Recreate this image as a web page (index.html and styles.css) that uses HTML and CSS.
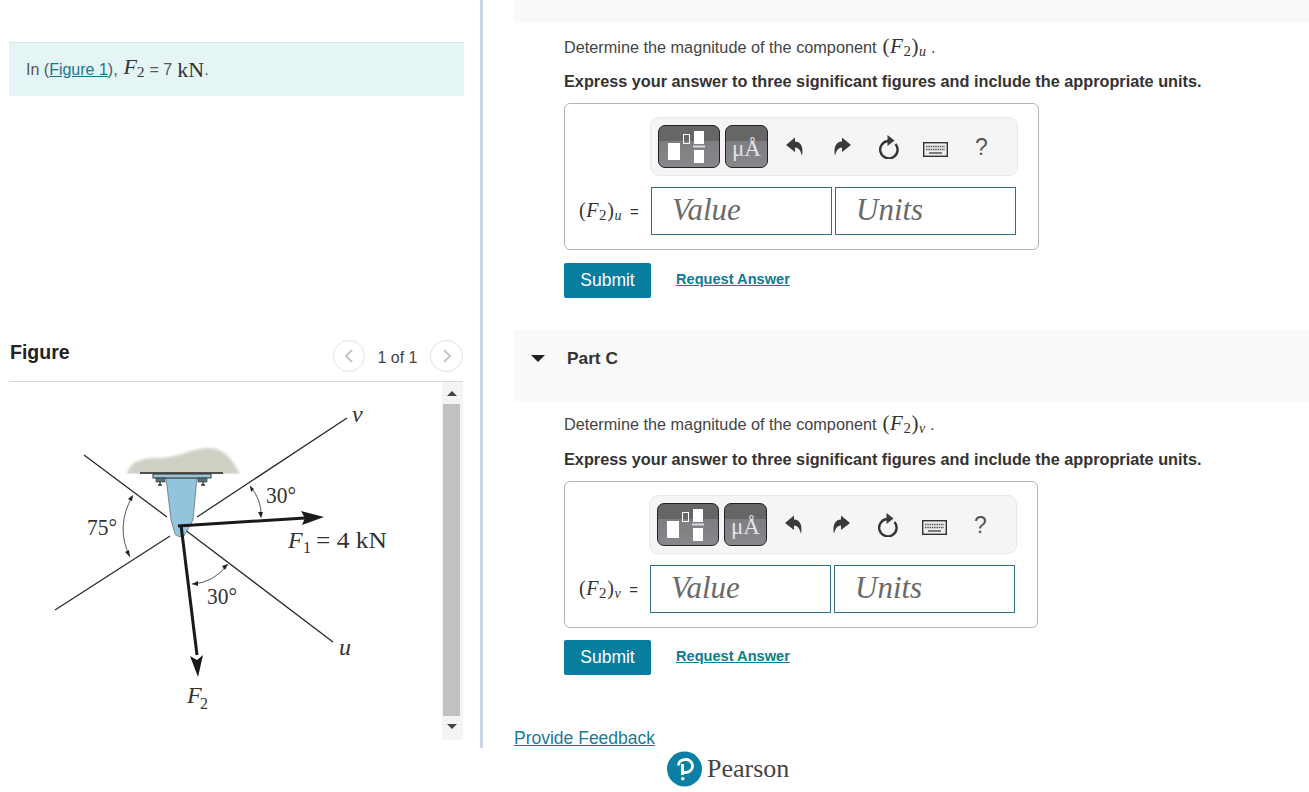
FILE: index.html
```html
<!DOCTYPE html>
<html lang="en">
<head>
<meta charset="utf-8">
<title>Part C</title>
<link rel="stylesheet" href="styles.css">
</head>
<body>
<div class="page">
  <aside class="left">
    <div class="info">In (<a href="#">Figure 1</a>),<span class="math math-info"><i>F</i><sub>2</sub></span><span class="info-eq">= 7</span><span class="math math-kn">kN</span>.</div>
    <div class="fig-head">
      <h2 class="fig-title">Figure</h2>
      <div class="pager">
        <span class="pg-btn"><svg width="12" height="16" viewBox="0 0 12 16"><path d="M9 2 3 8l6 6" class="chev"/></svg></span>
        <span class="pg-text">1 of 1</span>
        <span class="pg-btn pg-next"><svg width="12" height="16" viewBox="0 0 12 16"><path d="M3 2l6 6-6 6" class="chev"/></svg></span>
      </div>
    </div>
    <div class="fig-body">
      <svg class="diagram" width="433" height="358" viewBox="9 382 433 358">
        <defs>
          <filter id="soft" x="-10%" y="-20%" width="120%" height="140%"><feGaussianBlur stdDeviation="1.6"/></filter>
          <clipPath id="wallclip"><rect x="110" y="430" width="150" height="44"/></clipPath>
        </defs>
        <g clip-path="url(#wallclip)"><path d="M127 474 C130 462 140 458 160 458 C178 458 190 449 208 448 C222 447 232 458 240 474 Z" fill="#cfcfc3" filter="url(#soft)"/></g>
        <g class="thin">
          <path d="M347 418 197 517"/>
          <path d="M170 536 55 610"/>
          <path d="M84 455 167 517"/>
          <path d="M176 523 333 642"/>
        </g>
        <path d="M140 473H223" class="wall-line"/>
        <path d="M166 478H197L193 520 184 536Q178 538 175 534L171 520Z" fill="#93c4de" stroke="#333" stroke-width=".5"/>
        <rect x="153" y="474" width="58" height="4" fill="#9cc3d8" stroke="#333" stroke-width="1"/>
        <rect x="156" y="478" width="9" height="4" fill="#56707e" stroke="#333" stroke-width=".6"/>
        <rect x="198" y="478" width="9" height="4" fill="#56707e" stroke="#333" stroke-width=".6"/>
        <path d="M158 485h4M201 485h4M160 482v3M203 482v3" class="thin"/>
        <path d="M178 526 305 518" class="force"/>
        <path d="M324 517 301 511 305 518 302 525Z" fill="#1a1a1a"/>
        <path d="M181 525 197 655" class="force"/>
        <path d="M198 677 190 656 197 660 203 655Z" fill="#1a1a1a"/>
        <g class="arc">
          <path d="M132.500 496Q115 527 130 557"/>
          <path d="M250 486Q262 500 261 517"/>
          <path d="M228 564Q214 583 192 584"/>
        </g>
        <g fill="#222">
          <path d="M133 495 128 499 132 501Z"/>
          <path d="M130 557 125 552 129 550Z"/>
          <path d="M250 486 251 492 254 489Z"/>
          <path d="M261 518 258 512 263 512Z"/>
          <path d="M228 564 222 566 225 570Z"/>
          <path d="M192 584 198 581 198 586Z"/>
        </g>
        <text x="87" y="535" textLength="30" lengthAdjust="spacingAndGlyphs" class="fig-txt">75°</text>
        <text x="266" y="503" textLength="30" lengthAdjust="spacingAndGlyphs" class="fig-txt">30°</text>
        <text x="207" y="604" textLength="30" lengthAdjust="spacingAndGlyphs" class="fig-txt">30°</text>
        <text x="352" y="422" class="fig-txt fig-it">v</text>
        <text x="339" y="655" class="fig-txt fig-it">u</text>
        <text x="288" y="548" class="fig-txt fig-it">F</text>
        <text x="303" y="553" class="fig-sub">1</text>
        <text x="316" y="548" textLength="71" lengthAdjust="spacingAndGlyphs" class="fig-txt">= 4 kN</text>
        <text x="187" y="703" class="fig-txt fig-it">F</text>
        <text x="200" y="709" class="fig-sub">2</text>
      </svg>
      <div class="scrollbar">
        <span class="arrow-up"></span>
        <span class="thumb"></span>
        <span class="arrow-down"></span>
      </div>
    </div>
  </aside>

  <main class="right">
    <div class="band-top"></div>

    <p class="question q-first">Determine the magnitude of the component<span class="math math-q">(<i>F</i><sub>2</sub>)<sub><i>u</i></sub></span> .</p>
    <p class="express">Express your answer to three significant figures and include the appropriate units.</p>
    <div class="answer">
      <div class="toolbar">
        <button class="tool tool-wide"><svg width="48" height="34" viewBox="0 0 48 34"><path d="M1 13h12v17H1zM27 1h10v13H27zM27 20h10v13H27z" fill="#fff"/><rect x="16.500" y="4.500" width="6" height="9" fill="none" stroke="#fff"/><path d="M26 16.500h12" stroke="#ddd" stroke-width="2"/></svg></button>
        <button class="tool tool-unit">μÅ</button>
        <span class="ticon"><svg width="18" height="20" viewBox="0 0 18 20"><path d="M0 8 9 .5v4C14 4.500 18 9 16 19 15 14 13 11 9 10.500V15Z" class="solid"/></svg></span>
        <span class="ticon"><svg width="18" height="20" viewBox="0 0 18 20"><path d="M18 8 9 .5v4C4 4.500 0 9 2 19 3 14 5 11 9 10.500V15Z" class="solid"/></svg></span>
        <span class="ticon"><svg width="22" height="24" viewBox="0 0 22 24"><path d="M10 6A8.700 8.700 0 1 0 17.500 9" fill="none" stroke="#333" stroke-width="2.400"/><path d="M9.500 0v11l7-5.500Z" class="solid"/></svg></span>
        <span class="ticon ticon-kb"><svg width="25" height="15" viewBox="0 0 25 15"><rect x=".7" y=".7" width="23.600" height="13.600" fill="#eee" stroke="#333" stroke-width="1.400"/><path d="M3 4.500h19M3 7.500h19" stroke="#555" stroke-width="1.500" stroke-dasharray="1.500 .8"/><path d="M6 11h13" stroke="#555" stroke-width="1.500"/></svg></span>
        <span class="ticon ticon-help">?</span>
      </div>
      <div class="row">
        <span class="label math">(<i>F</i><sub>2</sub>)<sub><i>u</i></sub><span class="eq">=</span></span>
        <div class="field">Value</div>
        <div class="field">Units</div>
      </div>
    </div>
    <div class="actions">
      <button class="submit">Submit</button>
      <a href="#" class="req">Request Answer</a>
    </div>

    <div class="band-part">
      <span class="tri"></span>
      <h3 class="part-title">Part C</h3>
    </div>

    <p class="question q-second">Determine the magnitude of the component<span class="math math-q">(<i>F</i><sub>2</sub>)<sub><i>v</i></sub></span> .</p>
    <p class="express">Express your answer to three significant figures and include the appropriate units.</p>
    <div class="answer answer-v">
      <div class="toolbar">
        <button class="tool tool-wide"><svg width="48" height="34" viewBox="0 0 48 34"><path d="M1 13h12v17H1zM27 1h10v13H27zM27 20h10v13H27z" fill="#fff"/><rect x="16.500" y="4.500" width="6" height="9" fill="none" stroke="#fff"/><path d="M26 16.500h12" stroke="#ddd" stroke-width="2"/></svg></button>
        <button class="tool tool-unit">μÅ</button>
        <span class="ticon"><svg width="18" height="20" viewBox="0 0 18 20"><path d="M0 8 9 .5v4C14 4.500 18 9 16 19 15 14 13 11 9 10.500V15Z" class="solid"/></svg></span>
        <span class="ticon"><svg width="18" height="20" viewBox="0 0 18 20"><path d="M18 8 9 .5v4C4 4.500 0 9 2 19 3 14 5 11 9 10.500V15Z" class="solid"/></svg></span>
        <span class="ticon"><svg width="22" height="24" viewBox="0 0 22 24"><path d="M10 6A8.700 8.700 0 1 0 17.500 9" fill="none" stroke="#333" stroke-width="2.400"/><path d="M9.500 0v11l7-5.500Z" class="solid"/></svg></span>
        <span class="ticon ticon-kb"><svg width="25" height="15" viewBox="0 0 25 15"><rect x=".7" y=".7" width="23.600" height="13.600" fill="#eee" stroke="#333" stroke-width="1.400"/><path d="M3 4.500h19M3 7.500h19" stroke="#555" stroke-width="1.500" stroke-dasharray="1.500 .8"/><path d="M6 11h13" stroke="#555" stroke-width="1.500"/></svg></span>
        <span class="ticon ticon-help">?</span>
      </div>
      <div class="row">
        <span class="label math">(<i>F</i><sub>2</sub>)<sub><i>v</i></sub><span class="eq">=</span></span>
        <div class="field">Value</div>
        <div class="field">Units</div>
      </div>
    </div>
    <div class="actions actions-v">
      <button class="submit">Submit</button>
      <a href="#" class="req">Request Answer</a>
    </div>

    <a href="#" class="feedback">Provide Feedback</a>
    <div class="brand">
      <svg width="35" height="36" viewBox="0 0 35 36"><circle cx="17.500" cy="18" r="17.500" fill="#0b7fa6"/><path d="M11.500 14.500C11.500 10.500 15 8.500 19 8.500a6.500 6.500 0 0 1 0 13h-2" fill="none" stroke="#fff" stroke-width="2.800"/><path d="M15.500 13V24" stroke="#fff" stroke-width="3"/><circle cx="15.800" cy="27.700" r="1.800" fill="#fff"/></svg>
      <span class="brand-name">Pearson</span>
    </div>
  </main>
</div>
</body>
</html>
```
FILE: styles.css
```css
* { box-sizing: border-box; }
html, body { margin: 0; padding: 0; height: 792px; overflow: hidden; background: #fff; }
body { font-family: "Liberation Sans", Arial, sans-serif; font-size: 16px; line-height: 24px; color: #444; }
a { color: #17788f; }
p, h2, h3 { margin: 0; }
.page { display: flex; align-items: flex-start; }

.math { font-family: "Liberation Serif", "Times New Roman", serif; font-size: 21px; line-height: 0; color: #333; }
.math sub { font-size: 15px; line-height: 0; vertical-align: -3px; }
.math sub i { font-size: 14px; }
.math-q { margin-left: 6px; letter-spacing: .5px; }
.math-info { margin-left: 6px; font-size: 22px; }
.math-kn { margin-left: 5px; font-size: 22px; }
.info-eq { margin-left: 5px; }

.left { flex: none; width: 483px; height: 748px; padding: 42px 0 0 9px; border-right: 3px solid #cbd6e4; }
.info { width: 455px; height: 54px; padding-left: 17px; display: flex; align-items: center; white-space: pre; background: #e5f5f6; border-top: 1px solid #d9e7e8; color: #555; }
.fig-head { width: 454px; height: 49px; margin-top: 237px; padding-top: 7px; display: flex; justify-content: space-between; align-items: flex-start; border-bottom: 1px solid #d9d9d9; }
.fig-title { font-size: 19.500px; line-height: 24px; font-weight: bold; color: #222; padding-left: 1px; }
.pager { display: flex; align-items: center; gap: 12.500px; }
.pg-btn { width: 32px; height: 32px; display: flex; align-items: center; justify-content: center; border: 1px solid #e4e4e4; border-radius: 50%; }
.pg-next { width: 33px; }
.pg-text { color: #444; padding-top: 3px; }
.chev { fill: none; stroke: #c4c4c4; stroke-width: 1.800; }

.fig-body { width: 454px; height: 358px; display: flex; }
.diagram { flex: none; display: block; }
.thin { fill: none; stroke: #2b2b2b; stroke-width: 1.300; }
.wall-line { stroke: #222; stroke-width: 1.300; }
.force { stroke: #1a1a1a; stroke-width: 3; fill: none; }
.arc { fill: none; stroke: #444; stroke-width: .9; }
.fig-txt { font-family: "Liberation Serif", "Times New Roman", serif; font-size: 24px; fill: #333; }
.fig-it { font-style: italic; }
.fig-sub { font-family: "Liberation Serif", "Times New Roman", serif; font-size: 16px; fill: #333; }

.scrollbar { flex: none; width: 21px; display: flex; flex-direction: column; align-items: center; background: #f4f4f4; padding: 9px 2px 9px 0; }
.arrow-up { width: 0; height: 0; border: 5px solid transparent; border-top: 0; border-bottom: 5px solid #444; }
.thumb { width: 17px; height: 312px; margin: 8px 0; background: #c1c1c1; }
.arrow-down { width: 0; height: 0; border: 5px solid transparent; border-bottom: 0; border-top: 5px solid #444; }

.right { flex: 1; min-width: 0; margin-left: 31px; }
.band-top { height: 23px; background: #f9f9f9; }
.question { margin-left: 50px; font-size: 16.250px; color: #444; white-space: nowrap; }
.q-first { margin-top: 12px; }
.q-second { margin-top: 11px; padding-bottom: 1px; }
.express { margin: 10px 0 10px 50px; font-size: 16.250px; font-weight: bold; color: #333; white-space: nowrap; }

.answer { margin-left: 50px; width: 475px; height: 147px; padding: 13px 0 0 14px; border: 1px solid #b5b5b5; border-radius: 6px; }
.answer-v { width: 474px; }
.toolbar { margin-left: 71px; width: 368px; height: 59px; padding: 7px 0 0 7px; display: flex; background: #f5f5f5; border: 1px solid #e9e9e9; border-radius: 9px; }
.answer-v .toolbar { margin-left: 70px; }
.tool { flex: none; height: 43px; padding: 0; margin-right: 5px; display: flex; align-items: center; justify-content: center; border: 1px solid #222; border-radius: 7px; color: #e4e4e4; background: linear-gradient(#666 0, #666 15px, #7d7d82 15px, #87878c 100%); }
.tool-wide { width: 62px; padding-left: 4px; }
.tool-unit { width: 43px; margin-right: 0; font-family: "Liberation Serif", serif; font-size: 23px; padding-top: 4px; }
.ticon { flex: none; width: 47px; height: 43px; display: flex; align-items: center; justify-content: center; }
.ticon-kb { padding-top: 5px; }
.ticon-help { font-size: 23px; color: #555; margin-left: -1px; }
.ticon:nth-child(3) { margin-left: 3px; }
.solid { fill: #3a3a3a; }

.row { margin-top: 11px; display: flex; align-items: center; gap: 3px; }
.label { width: 69px; flex: none; white-space: nowrap; font-size: 20px; line-height: 24px; letter-spacing: .6px; }
.answer-v .label { width: 68px; }
.eq { margin-left: 8px; font-family: "Liberation Sans", sans-serif; font-size: 15px; }
.field { width: 181px; height: 48px; padding-left: 20px; font-family: "Liberation Serif", serif; font-style: italic; font-size: 31px; line-height: 44px; color: #6a6a6a; border: 1px solid #2f7085; }

.actions { margin: 13px 0 0 50px; display: flex; align-items: center; gap: 25px; }
.actions-v { margin-top: 12px; }
.submit { width: 87px; height: 35px; padding: 0; font-family: "Liberation Sans", sans-serif; font-size: 17.500px; color: #fff; background: #077d9f; border: 0; border-radius: 2px; }
.req { margin-bottom: 4px; font-size: 14.600px; font-weight: bold; color: #0f7a99; }

.band-part { margin-top: 32px; height: 71px; padding: 16px 0 0 17px; display: flex; align-items: flex-start; background: #f9f9f9; }
.tri { width: 0; height: 0; margin-top: 9px; border: 7px solid transparent; border-bottom: 0; border-top: 7px solid #222; }
.part-title { margin-left: 22px; font-size: 17.300px; line-height: 24px; color: #333; }

.feedback { display: block; width: max-content; margin-top: 51px; font-size: 17.500px; color: #1a7a96; }
.brand { margin: 1px 0 0 153px; display: flex; align-items: center; gap: 5px; }
.brand-name { font-family: "Liberation Serif", serif; font-size: 26px; color: #444; }
```
